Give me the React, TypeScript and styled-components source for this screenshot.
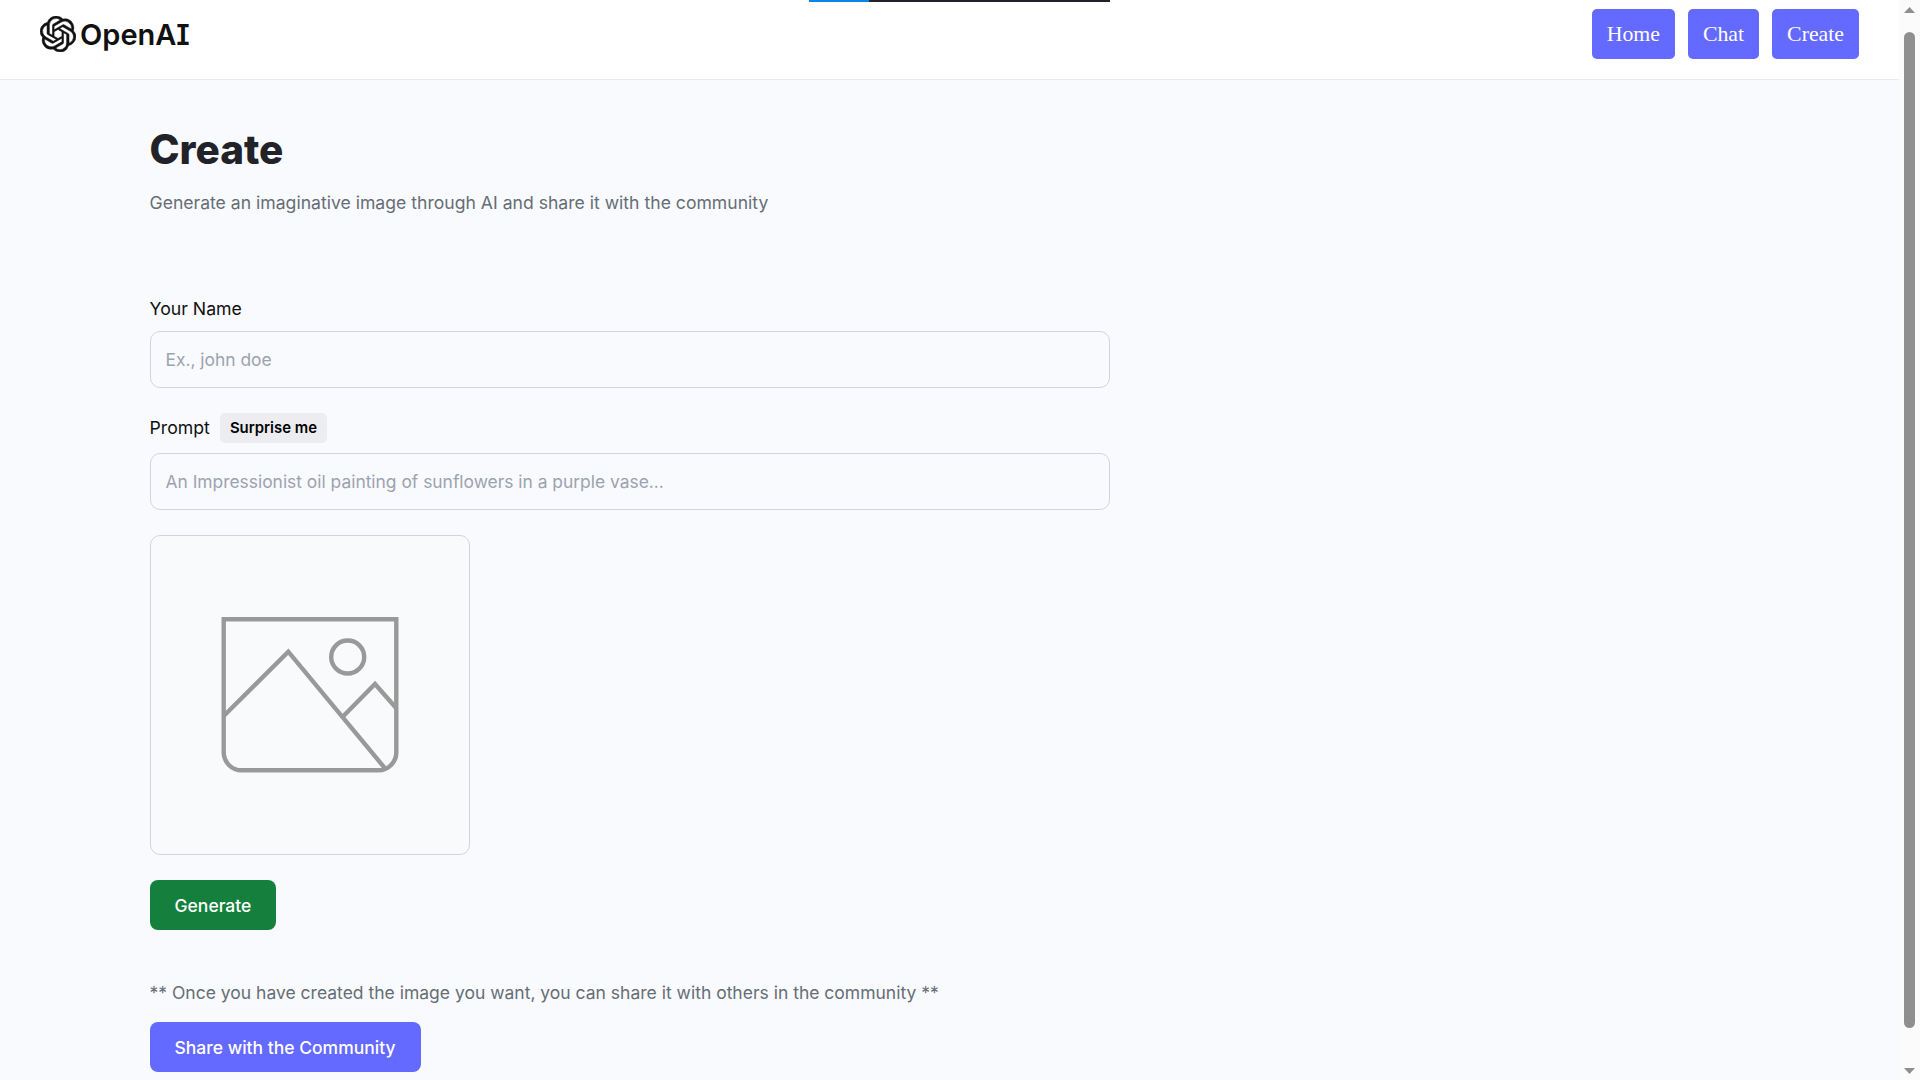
import React from 'react';
import styled, { createGlobalStyle } from 'styled-components';
import { SiOpenai } from 'react-icons/si';

const GlobalStyle = createGlobalStyle`
  * {
    box-sizing: border-box;
  }

  body {
    margin: 0;
    background: #f9fafe;
    font-family: Inter, 'Liberation Sans', sans-serif;
  }
`;

const Page = styled.div`
  position: relative;
  display: flex;
  height: 100vh;
  overflow: hidden;
`;

const Content = styled.div`
  flex: 1;
  min-width: 0;
`;

const ScrollRail = styled.div`
  display: flex;
  flex-direction: column;
  align-items: center;
  flex: none;
  width: 21px;
  background: #fbfbfb;
`;

const ScrollArrow = styled.svg<{ $gap: number }>`
  flex: none;
  width: 11px;
  height: 6px;
  margin-top: ${({ $gap }) => $gap}px;
  fill: #8f8f8f;
`;

const ScrollThumb = styled.div`
  flex: none;
  width: 11px;
  height: 996px;
  margin-top: 19px;
  border-radius: 6px;
  background: #8f8f8f;
`;

const ProgressBar = styled.div`
  position: absolute;
  top: 0;
  left: 809px;
  display: flex;
  width: 301px;
  height: 2px;
  background: #222328;
`;

const ProgressFill = styled.div`
  width: 60px;
  background: #0a84e8;
`;

const Header = styled.header`
  display: flex;
  justify-content: space-between;
  align-items: center;
  height: 80px;
  padding: 0 40px 11px;
  background: #ffffff;
  border-bottom: 1px solid #e6ebf4;
`;

const Logo = styled.div`
  display: flex;
  align-items: center;
  gap: 4px;
  color: #111111;
  font-size: 29px;
  font-weight: 600;
  font-feature-settings: 'cv08';

  svg {
    stroke: currentColor;
    stroke-width: 0.35;
  }
`;

const Nav = styled.nav`
  display: flex;
  gap: 13px;
`;

const NavButton = styled.a`
  display: flex;
  align-items: center;
  height: 50px;
  padding: 0 15px;
  border-radius: 5px;
  background: #6469ff;
  color: #ffffff;
  font-family: 'Liberation Serif', serif;
  font-size: 21.8px;
`;

const Main = styled.main`
  max-width: 1600px;
  margin: 0 auto;
  padding-top: 46px;
`;

const Title = styled.h1`
  margin: 0;
  color: #222328;
  font-size: 40.5px;
  font-weight: 800;
  line-height: 48px;
`;

const Subtitle = styled.p`
  margin: 15px 0 0;
  color: #666e75;
  font-size: 17.6px;
  line-height: 27px;
`;

const Form = styled.form`
  display: flex;
  flex-direction: column;
  gap: 25px;
  max-width: 960px;
  margin-top: 81px;
`;

const Field = styled.div`
  display: flex;
  flex-direction: column;
  gap: 10px;
`;

const LabelRow = styled.div`
  display: flex;
  align-items: center;
  gap: 10px;
`;

const Label = styled.label`
  color: #111111;
  font-size: 17.7px;
  font-weight: 400;
  line-height: 24px;
`;

const SurpriseButton = styled.button`
  height: 30px;
  padding: 0 10px;
  border: none;
  border-radius: 5px;
  background: #ececf1;
  color: #000000;
  font-family: inherit;
  font-size: 14.9px;
  font-weight: 600;
`;

const Input = styled.input`
  width: 100%;
  height: 57px;
  padding: 0 15px;
  border: 1px solid #d1d5db;
  border-radius: 10px;
  outline: none;
  background: #f9fafe;
  color: #111827;
  font-family: inherit;
  font-size: 17.4px;

  &::placeholder {
    color: #9ca3af;
  }
`;

const ImageBox = styled.div`
  display: flex;
  justify-content: center;
  align-items: center;
  width: 320px;
  height: 320px;
  border: 1px solid #d1d5db;
  border-radius: 10px;
  background: #f9fafb;
`;

const ActionButton = styled.button<{ $color: string }>`
  align-self: flex-start;
  height: 50px;
  padding: 0 25px;
  border: none;
  border-radius: 8px;
  background: ${({ $color }) => $color};
  color: #ffffff;
  font-family: inherit;
  font-size: 17.5px;
  font-weight: 500;
`;

const ShareSection = styled.div`
  display: flex;
  flex-direction: column;
  gap: 16px;
  margin-top: 24px;
`;

const Note = styled.p`
  margin: 0;
  color: #666e75;
  font-size: 17.5px;
  line-height: 27px;
`;

function ImagePlaceholder() {
  return (
    <svg width="180" height="160" viewBox="0 0 180 160" fill="none" stroke="#999999" strokeWidth="4.4">
      <path d="M3.7 4.3H176.3V137a18 18 0 0 1-18 18.3H21.7a18 18 0 0 1-18-18.3Z" />
      <path d="M3.7 101L68.3 36.7L165 153.3" />
      <path d="M122.7 101.7L155 69L176.3 93.3" />
      <circle cx="127.7" cy="42" r="16.5" />
    </svg>
  );
}

export default function App() {
  return (
    <Page>
      <GlobalStyle />
      <ProgressBar>
        <ProgressFill />
      </ProgressBar>
      <Content>
        <Header>
          <Logo>
            <SiOpenai size={36} />
            OpenAI
          </Logo>
          <Nav>
            <NavButton>Home</NavButton>
            <NavButton>Chat</NavButton>
            <NavButton>Create</NavButton>
          </Nav>
        </Header>
        <Main>
          <Title>Create</Title>
          <Subtitle>Generate an imaginative image through AI and share it with the community</Subtitle>
          <Form>
            <Field>
              <LabelRow>
                <Label>Your Name</Label>
              </LabelRow>
              <Input placeholder="Ex., john doe" />
            </Field>
            <Field>
              <LabelRow>
                <Label>Prompt</Label>
                <SurpriseButton type="button">Surprise me</SurpriseButton>
              </LabelRow>
              <Input placeholder="An Impressionist oil painting of sunflowers in a purple vase..." />
            </Field>
            <ImageBox>
              <ImagePlaceholder />
            </ImageBox>
            <ActionButton type="button" $color="#15803d">
              Generate
            </ActionButton>
            <ShareSection>
              <Note>** Once you have created the image you want, you can share it with others in the community **</Note>
              <ActionButton type="button" $color="#6469ff">
                Share with the Community
              </ActionButton>
            </ShareSection>
          </Form>
        </Main>
      </Content>
      <ScrollRail>
        <ScrollArrow $gap={7} viewBox="0 0 11 6">
          <path d="M5.5 0L11 6H0Z" />
        </ScrollArrow>
        <ScrollThumb />
        <ScrollArrow $gap={40} viewBox="0 0 11 6">
          <path d="M0 0H11L5.5 6Z" />
        </ScrollArrow>
      </ScrollRail>
    </Page>
  );
}
